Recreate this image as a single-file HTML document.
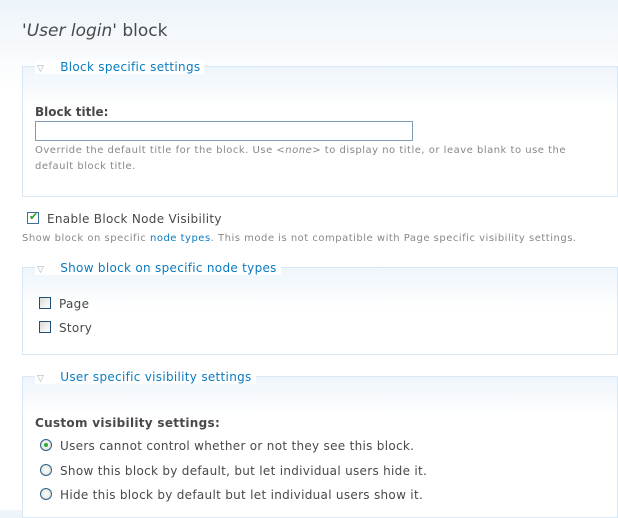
<!DOCTYPE html>
<html><head><style>
body{margin:0;width:618px;height:510px;overflow:hidden;background:linear-gradient(#edf4fa 0px,#ffffff 90px);font-family:"DejaVu Sans","Liberation Sans",sans-serif;color:#494949;position:relative}
.a{position:absolute;white-space:nowrap}
.fs{position:absolute;left:22px;width:594px;border:1px solid #d8e7f3;background:linear-gradient(#eef5fb 0,#ffffff 40px)}
.lg{position:absolute;top:-7px;left:12px;background:#fff;padding:0 4px 0 2px;font-size:12px;color:#0a7bc2;letter-spacing:0.3px}
.lg .t{color:#aaa;font-size:9px;margin-right:16px}
.help{font-size:10px;color:#888;line-height:16px;letter-spacing:0.5px}
.cb{display:inline-block;width:10px;height:10px;border:1px solid #1c5180;background:linear-gradient(135deg,#dcdcd6,#fff);vertical-align:-1px;margin-right:8px}
.rb{display:inline-block;width:10px;height:10px;border:1px solid #2a5f8e;border-radius:50%;background:radial-gradient(#fff,#d8d8d0);vertical-align:-1px;margin-right:8px;position:relative}
.lbl{font-size:12px;color:#494949;letter-spacing:0.3px}
</style></head><body>
<div class="a" style="left:22px;top:21px;font-size:17px;color:#494949">'<i>User login</i>' block</div>

<div class="fs" style="top:66px;height:129px">
<div class="lg"><span class="t">▽</span>Block specific settings</div>
<div class="a" style="left:12px;top:38px;font-size:12px;font-weight:bold">Block title:</div>
<div class="a" style="left:12px;top:54px;width:376px;height:18px;border:1px solid #7f9db9;background:#fff"></div>
<div class="a help" style="left:12px;top:76px">Override the default title for the block. Use <i>&lt;none&gt;</i> to display no title, or leave blank to use the<br>default block title.</div>
</div>

<div class="a lbl" style="left:27px;top:212px"><span class="cb" style="border-color:#3b6fa0;background:#fff;position:relative"><span style="position:absolute;left:1px;top:-3px;color:#21a121;font-size:11px;font-weight:bold">✔</span></span>Enable Block Node Visibility</div>
<div class="a help" style="left:22px;top:231px">Show block on specific <span style="color:#0a7bc2">node types</span>. This mode is not compatible with Page specific visibility settings.</div>

<div class="fs" style="top:267px;height:86px">
<div class="lg"><span class="t">▽</span>Show block on specific node types</div>
<div class="a lbl" style="left:16px;top:29px"><span class="cb"></span>Page</div>
<div class="a lbl" style="left:16px;top:53px"><span class="cb"></span>Story</div>
</div>

<div class="fs" style="top:376px;height:140px">
<div class="lg"><span class="t">▽</span>User specific visibility settings</div>
<div class="a" style="left:12px;top:39px;font-size:12px;font-weight:bold;letter-spacing:0.3px">Custom visibility settings:</div>
<div class="a lbl" style="left:17px;top:62px"><span class="rb"><span style="position:absolute;left:3px;top:3px;width:4px;height:4px;border-radius:50%;background:#2eae2e"></span></span>Users cannot control whether or not they see this block.</div>
<div class="a lbl" style="left:17px;top:87px"><span class="rb"></span>Show this block by default, but let individual users hide it.</div>
<div class="a lbl" style="left:17px;top:111px"><span class="rb"></span>Hide this block by default but let individual users show it.</div>
</div>
</body></html>
